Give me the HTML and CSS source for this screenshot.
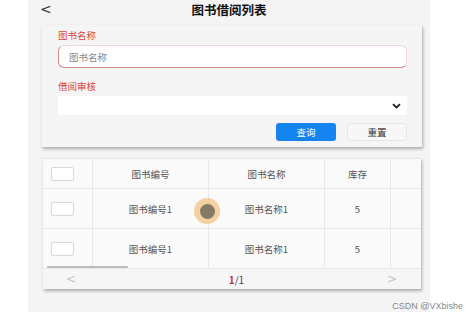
FILE: index.html
```html
<!DOCTYPE html>
<html lang="zh">
  <head>
    <meta charset="UTF-8" />
    <title>图书借阅列表</title>
    <link rel="stylesheet" href="styles.css">
  </head>
  <body>
    <div class="phone">
      <div class="topbar">
        <span class="back">&lt;</span>
        <h2>图书借阅列表</h2>
      </div>

      <div class="search-card">
        <label class="field-label">图书名称</label>
        <div class="text-input">图书名称</div>

        <label class="field-label second">借阅审核</label>
        <div class="select-input">
          <svg width="9" height="6" viewBox="0 0 9 6"><path d="M1 1.2 L4.5 4.5 L8 1.2" fill="none" stroke="#222" stroke-width="1.8"/></svg>
        </div>

        <div class="btns">
          <div class="btn btn-blue">查询</div>
          <div class="btn btn-plain">重置</div>
        </div>
      </div>

      <div class="table-card">
        <div class="table">
          <div class="row head">
            <div class="cell c-check"><span class="box"></span></div>
            <div class="cell c-wide">图书编号</div>
            <div class="cell c-wide">图书名称</div>
            <div class="cell c-num">库存</div>
            <div class="cell c-rest"></div>
          </div>
          <div class="row">
            <div class="cell c-check"><span class="box"></span></div>
            <div class="cell c-wide">图书编号1</div>
            <div class="cell c-wide">图书名称1</div>
            <div class="cell c-num">5</div>
            <div class="cell c-rest"></div>
          </div>
          <div class="row">
            <div class="cell c-check"><span class="box"></span></div>
            <div class="cell c-wide">图书编号1</div>
            <div class="cell c-wide">图书名称1</div>
            <div class="cell c-num">5</div>
            <div class="cell c-rest"></div>
          </div>
          <div class="scrollbar"></div>
          <!-- touch indicator -->
          <div class="touch"><span></span></div>
        </div>
        <div class="pager">
          <span class="arrow">&lt;</span>
          <span class="page"><b>1</b>/1</span>
          <span class="arrow">&gt;</span>
        </div>
      </div>
    </div>
    <div class="mark">CSDN @VXbishe</div>
  </body>
</html>
```

FILE: styles.css
```css
*{
    margin: 0;
    padding: 0;
    box-sizing: border-box;
}
body{
    background: #fff;
    font-family: "Noto Sans CJK SC", "Noto Sans", sans-serif;
    color: #333;
    position: relative;
    width: 474px;
    height: 317px;
    overflow: hidden;
}
.phone{
    margin-left: 28px;
    width: 402px;
    height: 312px;
    background: #f4f4f4;
    display: flex;
    flex-direction: column;
}
.topbar{
    height: 24px;
    display: flex;
    align-items: center;
    position: relative;
}
.back{
    margin-left: 12px;
    font-family: "DejaVu Sans", sans-serif;
    font-size: 14px;
    color: #333;
    line-height: 1;
    margin-top: -6px;
}
.topbar h2{
    position: absolute;
    left: 0;
    right: 0;
    top: 2px;
    text-align: center;
    font-size: 12.5px;
    font-weight: 700;
    color: #111;
    line-height: 16px;
}
.search-card{
    margin: 1px 8px 0 14px;
    background: #f5f5f5;
    box-shadow: 1px 2px 3px rgba(0,0,0,0.3);
    padding: 3px 15px 6px 16px;
    display: flex;
    flex-direction: column;
}
.field-label{
    font-size: 9.5px;
    color: #d9463e;
    line-height: 14px;
    height: 14px;
}
.field-label.second{
    margin-top: 11px;
}
.text-input{
    margin-top: 3px;
    height: 23px;
    background: #fff;
    border: 1px solid #f0d6d3;
    border-left-color: #d68a84;
    border-bottom-color: #d68a84;
    border-radius: 6px;
    font-size: 9.5px;
    color: #888;
    padding-left: 10px;
    display: flex;
    align-items: center;
}
.select-input{
    margin-top: 3px;
    height: 19px;
    background: #fff;
    display: flex;
    align-items: center;
    justify-content: flex-end;
    padding-right: 6px;
}
.btns{
    margin-top: 8px;
    display: flex;
    justify-content: flex-end;
    gap: 11px;
}
.btn{
    width: 60px;
    height: 18px;
    border-radius: 3px;
    font-size: 9.5px;
    display: flex;
    align-items: center;
    justify-content: center;
}
.btn-blue{
    background: #1583f0;
    color: #fff;
}
.btn-plain{
    background: #f7f7f7;
    border: 1px solid #e6e6e6;
    color: #333;
}
.table-card{
    margin: 11px 9px 0 15px;
    background: #f6f6f6;
    box-shadow: 1px 2px 3px rgba(0,0,0,0.3);
}
.table{
    position: relative;
}
.row{
    display: flex;
    height: 40px;
    border-bottom: 1px solid #e8e8e8;
}
.row.head{
    height: 31px;
    border-top: 1px solid #e8e8e8;
}
.cell{
    display: flex;
    align-items: center;
    justify-content: center;
    font-size: 9.5px;
    color: #555;
    background: #fafafa;
    border-right: 1px solid #e8e8e8;
}
.c-check{ width: 50px; }
.c-wide{ width: 116px; }
.c-num{ width: 66px; }
.c-rest{ flex: 1; border-right: none; }
.box{
    width: 23px;
    height: 14px;
    background: #fff;
    border: 1px solid #d8d8d8;
    border-radius: 2px;
    margin-left: -10px;
}
.scrollbar{
    position: absolute;
    left: 4px;
    bottom: 1px;
    width: 81px;
    height: 2px;
    background: #bbb;
    border-radius: 1px;
}
.touch{
    position: absolute;
    left: 151px;
    top: 40px;
    width: 26px;
    height: 26px;
    border-radius: 50%;
    background: rgba(240, 195, 130, 0.75);
    display: flex;
    align-items: center;
    justify-content: center;
}
.touch span{
    width: 15px;
    height: 15px;
    border-radius: 50%;
    background: #857a66;
}
.pager{
    height: 20px;
    display: flex;
    align-items: center;
    justify-content: space-between;
    padding: 0 24px 0 23px;
    font-size: 10px;
}
.arrow{
    font-family: "DejaVu Sans", sans-serif;
    color: #c4c4c4;
    font-size: 12px;
}
.page{
    color: #444;
    margin-left: 10px;
}
.page b{
    color: #c8352e;
}
.mark{
    position: absolute;
    right: 11px;
    bottom: 6px;
    font-family: "Liberation Sans", sans-serif;
    font-size: 9px;
    color: #888;
}
```
